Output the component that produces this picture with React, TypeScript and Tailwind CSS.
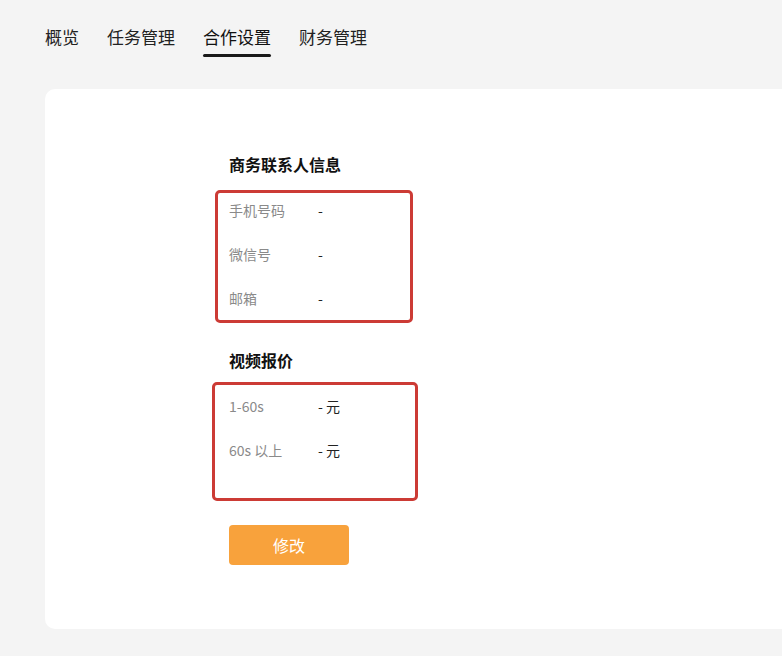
import React from "react";

const font = { fontFamily: '"Noto Sans CJK SC", "Noto Sans", sans-serif' };

const tabs = ["概览", "任务管理", "合作设置", "财务管理"];

function Row({ label, value }: { label: string; value: string }) {
  return (
    <div className="flex h-[44px] items-center text-[14px]">
      <span className="w-[89px] text-[#8a8a8a]">{label}</span>
      <span className="text-[#222]">{value}</span>
    </div>
  );
}

export default function App() {
  return (
    <div
      className="h-[656px] w-[782px] overflow-hidden bg-[#f4f4f4]"
      style={font}
    >
      <nav className="flex gap-[28px] pl-[45px] pt-[25px]">
        {tabs.map((t) => (
          <div key={t} className="flex flex-col items-stretch">
            <span
              className={
                "text-[17px] leading-[24px] " +
                (t === "合作设置" ? "text-[#111]" : "text-[#222]")
              }
            >
              {t}
            </span>
            <span
              className={
                "mt-[5px] h-[3px] rounded-full " +
                (t === "合作设置" ? "bg-[#1a1a1a]" : "bg-transparent")
              }
            />
          </div>
        ))}
      </nav>

      <section className="ml-[45px] mt-[32px] h-[540px] w-[760px] rounded-[10px] bg-white pl-[184px] pt-[64px]">
        <h2 className="h-[22px] text-[16px] font-bold leading-[22px] text-[#111]">
          商务联系人信息
        </h2>
        <div className="relative mt-[13px] w-[180px]">
          <Row label="手机号码" value="-" />
          <Row label="微信号" value="-" />
          <Row label="邮箱" value="-" />
          <div className="pointer-events-none absolute left-[-14px] top-[2px] h-[133px] w-[198px] rounded-[5px] border-[3px] border-[#cc3b35]" />
        </div>

        <h2 className="mt-[29px] h-[22px] text-[16px] font-bold leading-[22px] text-[#111]">
          视频报价
        </h2>
        <div className="relative mt-[13px] w-[180px]">
          <Row label="1-60s" value="- 元" />
          <Row label="60s 以上" value="- 元" />
          <div className="pointer-events-none absolute left-[-17px] top-[-2px] h-[119px] w-[206px] rounded-[5px] border-[3px] border-[#cc3b35]" />
        </div>

        <button className="mt-[53px] h-[40px] w-[120px] rounded-[4px] bg-[#f8a23c] text-[16px] text-white">
          修改
        </button>
      </section>
    </div>
  );
}
